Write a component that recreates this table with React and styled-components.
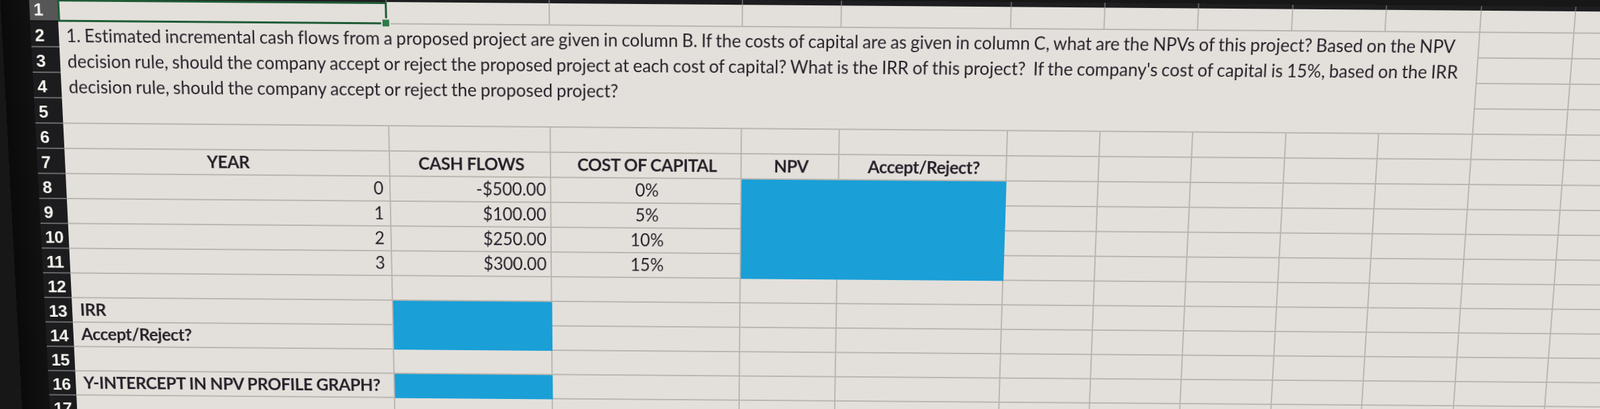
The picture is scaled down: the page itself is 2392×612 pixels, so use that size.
import React from 'react';
import styled, { createGlobalStyle } from 'styled-components';

const BG = '#e3e0db';
const LINE = '#b9b5af';
const FILL = '#1a9fd7';
const INK = '#262029';

/* widths of columns A..M (px, before the photo's perspective) */
const COLS = [493, 244, 289, 148, 254, 140, 140, 141, 140, 142, 141, 140, 140];

const GlobalStyle = createGlobalStyle`
  html, body { margin: 0; padding: 0; background: #141414; overflow: hidden; }
  #root { width: 2392px; height: 612px; }
`;

const Viewport = styled.div`
  width: 2392px;
  height: 612px;
  overflow: hidden;
  background: #171718;
`;

const Sheet = styled.div`
  display: grid;
  grid-template-columns: 43px 42px ${COLS.map((c) => `${c}px`).join(' ')};
  grid-template-rows: 7px 33px repeat(17, 38px);
  width: max-content;
  transform-origin: 1100px 0;
  transform: rotate(0.45deg) matrix3d(1, 0, 0, 0, 0, 1.017, 0, 0.0000567, 0, 0, 1, 0, 0, 0, 0, 1);
  font-family: Lato, 'Open Sans', sans-serif;
  color: ${INK};
`;

const Bezel = styled.div`
  grid-column: 1;
  grid-row: 1 / -1;
  background: linear-gradient(90deg, #0a0a0b 0%, #111112 100%);
`;

const ColHead = styled.div`
  box-sizing: border-box;
  background: #1e1e20;
  border-right: 2px solid ${(p) => (p.$corner ? '#1e1e20' : '#5e5e60')};
`;

const RowHead = styled.div`
  box-sizing: border-box;
  display: flex;
  align-items: flex-end;
  padding: 0 0 3px 6px;
  background: ${(p) => (p.$active ? '#565657' : '#1c1c1e')};
  border-bottom: 2px solid ${(p) => (p.$active ? '#141414' : '#6a6a6b')};
  color: #f3f3ee;
  font: 700 26px/1 'Liberation Sans', Arial, sans-serif;
  letter-spacing: -0.5px;
`;

const Cell = styled.div`
  box-sizing: border-box;
  min-width: 0;
  display: flex;
  align-items: flex-end;
  justify-content: ${(p) =>
    p.$align === 'right' ? 'flex-end' : p.$align === 'center' ? 'center' : 'flex-start'};
  padding: 0 ${(p) => p.$padR ?? 8}px 3px 12px;
  grid-column: span ${(p) => p.$cols || 1};
  grid-row: span ${(p) => p.$rows || 1};
  background: ${(p) => (p.$fill ? FILL : BG)};
  border-right: 2px solid ${(p) => (p.$fill ? FILL : LINE)};
  border-bottom: 2px solid ${(p) => (p.$fill ? FILL : LINE)};
  font-size: 26px;
  font-weight: ${(p) => (p.$bold ? 700 : 400)};
  letter-spacing: ${(p) => (p.$bold ? '-0.5px' : '0')};
  line-height: 1.2;
  white-space: nowrap;
`;

const SelectedCell = styled(Cell)`
  position: relative;
  border: 3px solid #1f5b36;
`;

const FillHandle = styled.span`
  position: absolute;
  right: -8px;
  bottom: -8px;
  width: 10px;
  height: 10px;
  background: #2e7b49;
  border: 2px solid ${BG};
  z-index: 2;
`;

const Prompt = styled(Cell)`
  display: block;
  position: relative;
  z-index: 1;
  padding: 1px 0 0 11px;
  font-size: 26.3px;
  line-height: 38px;
  letter-spacing: 0.05px;
  word-spacing: -1px;
`;

const PromptLine = styled.div`
  white-space: nowrap;
`;

const blanks = (n, key) => Array.from({ length: n }, (_, i) => <Cell key={`${key}-${i}`} />);
const head = (n, active) => (
  <RowHead key={`h${n}`} $active={active}>
    {n}
  </RowHead>
);

const DATA = [
  ['0', '-$500.00', '0%'],
  ['1', '$100.00', '5%'],
  ['2', '$250.00', '10%'],
  ['3', '$300.00', '15%'],
];

export default function App() {
  const cells = [];

  cells.push(head(1, true));
  cells.push(
    <SelectedCell key="a1">
      <FillHandle />
    </SelectedCell>
  );
  cells.push(...blanks(12, 'r1'));

  cells.push(head(2));
  cells.push(
    <Prompt key="prompt" $cols={10} $rows={4}>
      <PromptLine>
        1. Estimated incremental cash flows from a proposed project are given in column B. If the costs of capital are as given in column C, what are the NPVs of this project? Based on the NPV
      </PromptLine>
      <PromptLine>
        decision rule, should the company accept or reject the proposed project at each cost of capital? What is the IRR of this project?&nbsp; If the company's cost of capital is 15%, based on the IRR
      </PromptLine>
      <PromptLine>decision rule, should the company accept or reject the proposed project?</PromptLine>
    </Prompt>
  );
  cells.push(...blanks(3, 'r2'));
  [3, 4, 5].forEach((n) => {
    cells.push(head(n));
    cells.push(...blanks(3, `r${n}`));
  });

  cells.push(head(6));
  cells.push(...blanks(13, 'r6'));

  cells.push(head(7));
  ['YEAR', 'CASH FLOWS', 'COST OF CAPITAL', 'NPV', 'Accept/Reject?'].forEach((t) => {
    cells.push(
      <Cell key={t} $bold $align="center" $padR={8}>
        {t}
      </Cell>
    );
  });
  cells.push(...blanks(8, 'r7'));

  DATA.forEach(([year, flow, rate], i) => {
    const n = 8 + i;
    cells.push(head(n));
    cells.push(
      <Cell key={`y${n}`} $align="right" $padR={9}>
        {year}
      </Cell>
    );
    cells.push(
      <Cell key={`f${n}`} $align="right" $padR={6}>
        {flow}
      </Cell>
    );
    cells.push(
      <Cell key={`c${n}`} $align="center">
        {rate}
      </Cell>
    );
    if (i === 0) cells.push(<Cell key="npv" $fill $cols={2} $rows={4} />);
    cells.push(...blanks(8, `r${n}`));
  });

  cells.push(head(12));
  cells.push(...blanks(13, 'r12'));

  cells.push(head(13));
  cells.push(
    <Cell key="irr" $bold>
      IRR
    </Cell>
  );
  cells.push(<Cell key="irrv" $fill $rows={2} />);
  cells.push(...blanks(11, 'r13'));

  cells.push(head(14));
  cells.push(
    <Cell key="acc" $bold>
      Accept/Reject?
    </Cell>
  );
  cells.push(...blanks(11, 'r14'));

  cells.push(head(15));
  cells.push(...blanks(13, 'r15'));

  cells.push(head(16));
  cells.push(
    <Cell key="yint" $bold>
      Y-INTERCEPT IN NPV PROFILE GRAPH?
    </Cell>
  );
  cells.push(<Cell key="yintv" $fill />);
  cells.push(...blanks(11, 'r16'));

  [17, 18].forEach((n) => {
    cells.push(head(n));
    cells.push(...blanks(13, `r${n}`));
  });

  return (
    <>
      <GlobalStyle />
      <Viewport>
        <Sheet>
          <Bezel />
          <ColHead $corner />
          {COLS.map((_, i) => (
            <ColHead key={`col${i}`} />
          ))}
          {cells}
        </Sheet>
      </Viewport>
    </>
  );
}
